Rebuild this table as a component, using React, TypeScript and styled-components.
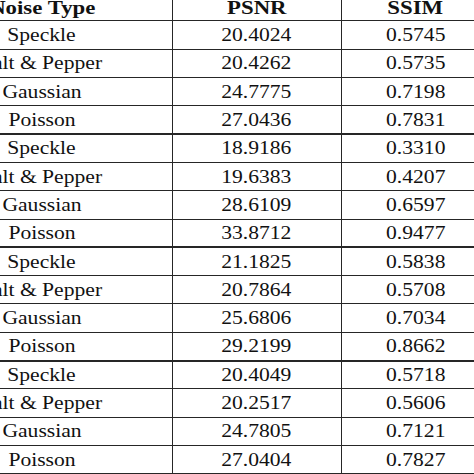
import React from 'react';
import styled, { createGlobalStyle } from 'styled-components';

const GlobalStyle = createGlobalStyle`
  html, body {
    margin: 0;
    padding: 0;
    background: #ffffff;
  }
`;

const Page = styled.div`
  width: 474px;
  height: 474px;
  overflow: hidden;
  background: #ffffff;
`;

const Table = styled.table`
  margin-left: -88px;
  margin-top: -4.3px;
  border-collapse: collapse;
  table-layout: fixed;
  width: 577px;
  font-family: "Liberation Serif", "Times New Roman", serif;
  font-size: 18px;
  color: #111111;
`;

const HeadRow = styled.tr`
  height: 25px;
`;

const Row = styled.tr<{ $groupEnd?: boolean }>`
  height: 28.33px;
  border-bottom: ${p => (p.$groupEnd ? '2.2px' : '1.5px')} solid #262626;
`;

const HeadCell = styled.th`
  padding: 0 0 2px 0;
  font-size: 19px;
  font-weight: bold;
  text-align: center;
  vertical-align: bottom;
  line-height: 20px;
  border-bottom: 1.8px solid #262626;
  border-left: 1.6px solid #262626;

  &:first-child {
    border-left: none;
  }
`;

const Cell = styled.td`
  padding: 0;
  text-align: center;
  vertical-align: middle;
  line-height: 20px;
  border-left: 1.6px solid #262626;

  &:first-child {
    border-left: none;
  }
`;

const Text = styled.span`
  display: inline-block;
  white-space: nowrap;
  transform: scaleX(1.2);
`;

const rows = [
  { type: 'Speckle', psnr: '20.4024', ssim: '0.5745' },
  { type: 'Salt & Pepper', psnr: '20.4262', ssim: '0.5735' },
  { type: 'Gaussian', psnr: '24.7775', ssim: '0.7198' },
  { type: 'Poisson', psnr: '27.0436', ssim: '0.7831' },
  { type: 'Speckle', psnr: '18.9186', ssim: '0.3310' },
  { type: 'Salt & Pepper', psnr: '19.6383', ssim: '0.4207' },
  { type: 'Gaussian', psnr: '28.6109', ssim: '0.6597' },
  { type: 'Poisson', psnr: '33.8712', ssim: '0.9477' },
  { type: 'Speckle', psnr: '21.1825', ssim: '0.5838' },
  { type: 'Salt & Pepper', psnr: '20.7864', ssim: '0.5708' },
  { type: 'Gaussian', psnr: '25.6806', ssim: '0.7034' },
  { type: 'Poisson', psnr: '29.2199', ssim: '0.8662' },
  { type: 'Speckle', psnr: '20.4049', ssim: '0.5718' },
  { type: 'Salt & Pepper', psnr: '20.2517', ssim: '0.5606' },
  { type: 'Gaussian', psnr: '24.7805', ssim: '0.7121' },
  { type: 'Poisson', psnr: '27.0404', ssim: '0.7827' },
];

const App: React.FC = () => {
  return (
    <Page>
      <GlobalStyle />
      <Table>
        <colgroup>
          <col style={{ width: 260 }} />
          <col style={{ width: 169 }} />
          <col style={{ width: 148 }} />
        </colgroup>
        <thead>
          <HeadRow>
            <HeadCell><Text>Noise Type</Text></HeadCell>
            <HeadCell><Text>PSNR</Text></HeadCell>
            <HeadCell><Text>SSIM</Text></HeadCell>
          </HeadRow>
        </thead>
        <tbody>
          {rows.map((row, index) => (
            <Row key={index} $groupEnd={index % 4 === 3}>
              <Cell><Text>{row.type}</Text></Cell>
              <Cell><Text>{row.psnr}</Text></Cell>
              <Cell><Text>{row.ssim}</Text></Cell>
            </Row>
          ))}
        </tbody>
      </Table>
    </Page>
  );
};

export default App;
